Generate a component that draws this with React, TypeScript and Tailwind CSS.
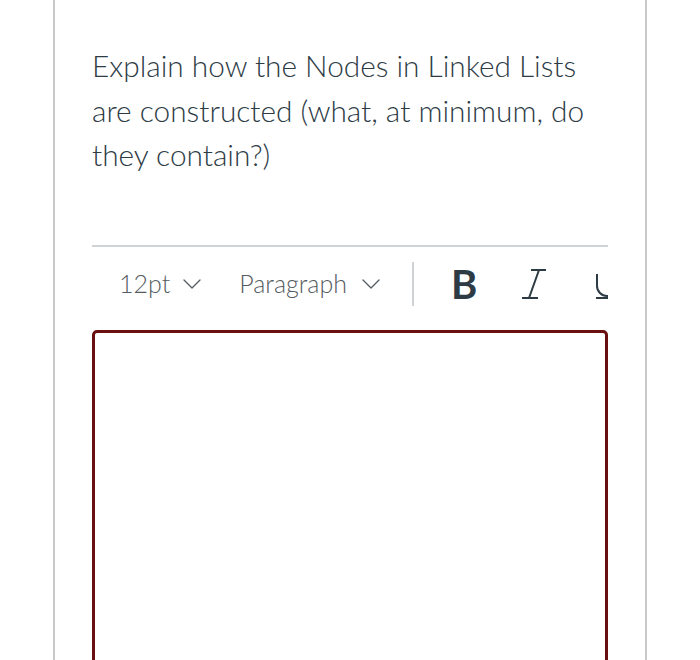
import React from 'react'

function Chevron() {
  return (
    <svg width="18" height="10" viewBox="0 0 18 10" fill="none" className="shrink-0">
      <path d="M1 1l8 8 8-8" stroke="#555c61" strokeWidth="1.3" strokeLinecap="round" strokeLinejoin="round" />
    </svg>
  )
}

export default function App() {
  return (
    <div className="h-[660px] w-[700px] overflow-hidden bg-white" style={{ fontFamily: 'Lato, "Open Sans", sans-serif' }}>
      <div className="ml-[53px] h-full w-[594px] border-x-2 border-[#c9c9c9] px-[37px]">
        {/* Question text */}
        <p className="pt-[44px] text-[29.8px] font-light leading-[44.5px] text-[#2d3b45]">
          Explain how the Nodes in Linked Lists are constructed (what, at minimum, do they contain?)
        </p>

        {/* Editor */}
        <div className="mt-[67px] border-t-2 border-[#cfd3d6]">
          <div className="flex h-[74px] items-center overflow-hidden pl-[27px] text-[25px] font-light text-[#555c61]">
            <span className="shrink-0">12pt</span>
            <span className="ml-[13px]"><Chevron /></span>
            <span className="ml-[38px] shrink-0">Paragraph</span>
            <span className="ml-[15px]"><Chevron /></span>
            <span className="ml-[32px] h-[44px] w-[2px] shrink-0 bg-[#cfd3d6]" />
            <span className="ml-[37px] shrink-0 text-[40px] font-bold leading-none text-[#2d3b45]">B</span>
            <svg width="26" height="32" viewBox="0 0 26 32" fill="none" className="ml-[44px] shrink-0">
              <path d="M10 2h15M1 30h16M18 2L8 30" stroke="#2d3b45" strokeWidth="2" />
            </svg>
            <svg width="30" height="32" viewBox="0 0 30 32" fill="none" className="ml-[48px] shrink-0">
              <path d="M2 6v12a10 10 0 0 0 20 0V6M1 30h26" stroke="#2d3b45" strokeWidth="2" />
            </svg>
          </div>
          <div className="mt-[9px] h-[400px] rounded-[5px] border-[3px] border-[#6a1010]" />
        </div>
      </div>
    </div>
  )
}
